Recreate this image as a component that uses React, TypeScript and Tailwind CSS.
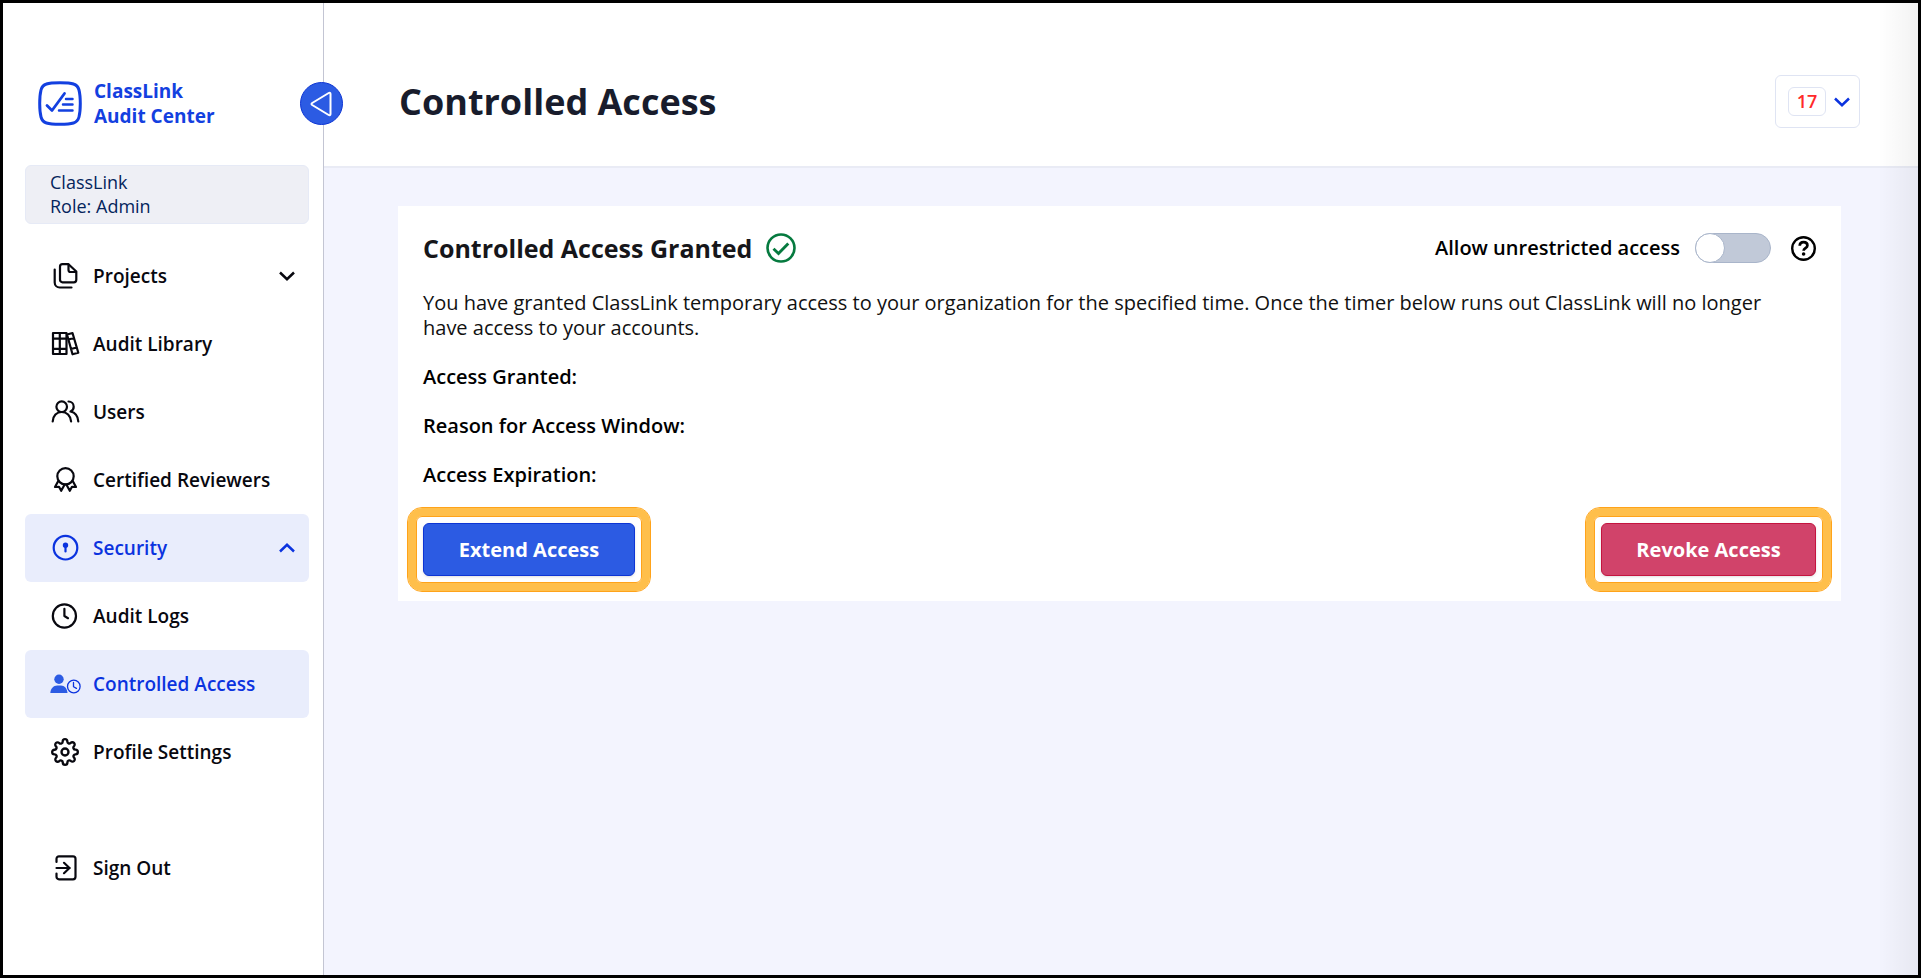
import type { ReactNode } from "react";
import { FiSettings } from "react-icons/fi";

function Icon({ children }: { children: ReactNode }) {
  return (
    <svg
      viewBox="0 0 28 28"
      className="size-7 shrink-0 overflow-visible"
      fill="none"
      stroke="currentColor"
      strokeWidth="2.2"
      strokeLinecap="round"
      strokeLinejoin="round"
      aria-hidden="true"
    >
      {children}
    </svg>
  );
}

function Chevron({ up = false }: { up?: boolean }) {
  return (
    <svg viewBox="0 0 16 10" className="h-[10px] w-4" fill="none" stroke="currentColor" strokeWidth="2.5" aria-hidden="true">
      <path d={up ? "M1 8.5 8 1.8l7 6.7" : "M1 1.5 8 8.2l7-6.7"} />
    </svg>
  );
}

const icons = {
  projects: (
    <Icon>
      <path d="M11.500 2.200H17.500L25.300 9.500v8.300a2.500 2.500 0 0 1-2.500 2.500H11.500A2.500 2.500 0 0 1 9 17.800V4.700a2.500 2.500 0 0 1 2.500-2.500Z" />
      <path d="M17.500 2.600v5.400a2 2 0 0 0 2 2h5.500" />
      <path d="M3.700 7.500v13a5 5 0 0 0 5 5H20.500" />
    </Icon>
  ),
  library: (
    <Icon>
      <path d="M2 3h13.500v21H2ZM8.800 3v21M2 8.600h13.500M2 18.800h13.500" />
      <path d="m16 4.500 5.500-1.500 5.800 19.800-5.800 1.500ZM17.500 9.500l5.500-1.500M20 19l5.700-1.500" />
    </Icon>
  ),
  users: (
    <Icon>
      <circle cx="10.700" cy="8.700" r="5.300" />
      <path d="M1.700 23.500c.3-5.800 4-9.500 9-9.500s8.900 3.700 9.400 9.500" />
      <path d="M17.500 3.500c3 0 5.200 2.200 5.200 5.200 0 2.300-1.200 4-3.200 4.800 4.500 1 7.500 5 7.800 10" />
    </Icon>
  ),
  reviewers: (
    <Icon>
      <circle cx="14.500" cy="10.300" r="8.200" />
      <path d="m7 15.500-3 5.500 4-.2 2.200 4 3.600-6.500M22 15.500l3 5.500-4-.2-2.200 4-3.600-6.500" />
    </Icon>
  ),
  security: (
    <Icon>
      <circle cx="14.500" cy="13.700" r="11.800" />
      <circle cx="14.500" cy="11.300" r="1.600" fill="currentColor" />
      <path d="M14.500 12v5.500" />
    </Icon>
  ),
  logs: (
    <Icon>
      <circle cx="13.400" cy="14" r="11.600" />
      <path d="M13.400 6.800V14l3.600 2.200" />
    </Icon>
  ),
  controlled: (
    <Icon>
      <circle cx="8" cy="9.200" r="4.700" fill="#2c5be3" stroke="none" />
      <path d="M-.7 23c.2-4.200 3-7.500 7-7.500h3.700c3.500 0 6.200 3 6.500 7.500Z" fill="#2c5be3" stroke="none" />
      <circle cx="22.800" cy="16.500" r="6.300" strokeWidth="1.300" />
      <path d="M22.500 12.500v4.200l3 1.700" strokeWidth="1.300" />
    </Icon>
  ),
  signOut: (
    <Icon>
      <path d="M5.500 8V4.800a2.500 2.500 0 0 1 2.500-2.500h14a2.500 2.500 0 0 1 2.500 2.500v18a2.500 2.500 0 0 1-2.500 2.500H8a2.500 2.500 0 0 1-2.500-2.500V19.500" />
      <path d="M5.500 14h13" />
      <path d="m13 8.800 5.500 5.200-5.500 5.200" />
    </Icon>
  ),
};

function NavItem({
  icon,
  label,
  active = false,
  chevron,
}: {
  icon: ReactNode;
  label: string;
  active?: boolean;
  chevron?: "up" | "down";
}) {
  const tone = active ? "bg-[#e9edfc] text-[#0b33df]" : "text-[#08080f]";
  const layout = `flex h-[68px] w-full items-center gap-[14px] rounded-md pr-[14px] pl-[26px] text-left text-[19px] font-semibold ${tone}`;
  if (chevron) {
    return (
      <li>
        <button type="button" aria-expanded={chevron === "up"} className={layout}>
          {icon}
          <span className="flex-1">{label}</span>
          <Chevron up={chevron === "up"} />
        </button>
      </li>
    );
  }
  return (
    <li>
      <a href="#" className={layout}>
        {icon}
        <span>{label}</span>
      </a>
    </li>
  );
}

function Highlight({ children }: { children: ReactNode }) {
  return (
    <div className="relative">
      {children}
      <span className="pointer-events-none absolute -inset-4 rounded-[15px] border border-[#ffa31a] before:absolute before:inset-0 before:rounded-[14px] before:border-8 before:border-[#ffbf4b] after:absolute after:inset-2 after:rounded-[6px] after:border after:border-[#ffa31a]" />
    </div>
  );
}

export default function App() {
  return (
    <div className="relative flex min-h-screen border-3 border-black bg-white font-['Open_Sans',sans-serif] text-black">
      <aside className="flex w-[321px] shrink-0 flex-col border-r border-[#c3c5d3] bg-white">
        <div className="mt-[78px] flex h-[45px] items-center">
          <svg viewBox="0 0 44 45" className="ml-[35px] h-[45px] w-11 shrink-0" fill="none" stroke="#1340e0" strokeLinecap="round" strokeLinejoin="round" aria-hidden="true">
            <path d="M22 1.700c6 0 10.500.2 13.500 1.300 3 1 4.700 3 5.500 6 1 4 1.300 8.500 1.300 13.500S42 32 41 36c-.8 3-2.500 5-5.500 6-3 1-7.500 1.300-13.500 1.300S11.500 43 8.500 42C5.500 41 3.800 39 3 36c-1-4-1.300-8.500-1.300-13.500S2 13 3 9c.8-3 2.500-5 5.500-6 3-1.100 7.500-1.300 13.500-1.300Z" strokeWidth="3" />
            <path d="m9 24.500 5 5L26.500 12.500" strokeWidth="2.800" />
            <path d="M28 18h6.500M25 23.500h9.500M21 29.500h13.500" strokeWidth="2.500" />
          </svg>
          <p className="ml-3 flex-1 text-[19px] leading-[25px] font-bold text-[#1340e0]">
            ClassLink
            <br />
            Audit Center
          </p>
          <button type="button" aria-label="Collapse menu" className="relative z-10 -mr-5 flex size-[43px] items-center justify-center rounded-full border border-[#0d35d4] bg-[#2c5be3] text-white">
            <svg viewBox="0 0 24 26" className="h-[26px] w-6" fill="none" stroke="currentColor" strokeWidth="2" strokeLinejoin="round" aria-hidden="true">
              <path d="M20.500 3c0-1.200-.8-1.600-1.800-1L2.200 12c-.9.600-.9 1.400 0 2l16.500 10c1 .6 1.800.2 1.800-1Z" />
            </svg>
          </button>
        </div>

        <div className="mt-[39px] mr-[14px] ml-[22px] h-[59px] rounded-md border border-[#e6eaf6] bg-[#eeeff5] px-6 pt-1 text-[18px] leading-6 text-[#04245c]">
          <p>ClassLink</p>
          <p>Role: Admin</p>
        </div>

        <nav aria-label="Main" className="mt-[18px] mr-[14px] ml-[22px]">
          <ul>
            <NavItem icon={icons.projects} label="Projects" chevron="down" />
            <NavItem icon={icons.library} label="Audit Library" />
            <NavItem icon={icons.users} label="Users" />
            <NavItem icon={icons.reviewers} label="Certified Reviewers" />
            <NavItem icon={icons.security} label="Security" active chevron="up" />
            <NavItem icon={icons.logs} label="Audit Logs" />
            <NavItem icon={icons.controlled} label="Controlled Access" active />
            <NavItem icon={<FiSettings className="size-7 shrink-0" />} label="Profile Settings" />
          </ul>
          <ul className="mt-12">
            <NavItem icon={icons.signOut} label="Sign Out" />
          </ul>
        </nav>
      </aside>

      <div className="flex min-w-0 flex-1 flex-col">
        <header className="flex h-[165px] items-center justify-between border-b-2 border-[#e9ebf5] pt-[34px] pr-[58px] pl-[75px]">
          <h1 className="text-[36px] leading-[50px] font-bold text-[#181c2c]">Controlled Access</h1>
          <button type="button" aria-label="17 notifications" className="flex h-[53px] w-[85px] items-center justify-between rounded-md border border-[#dfe4f3] pr-[9px] pl-3 text-[#0b33df]">
            <span className="flex h-[29px] w-[38px] items-center justify-center rounded-md border border-[#dfe4f3] text-[18px] font-semibold text-[#ff2a2a]">17</span>
            <Chevron />
          </button>
        </header>

        <main className="flex-1 bg-[#f3f4fe] pt-[38px] pr-[77px] pl-[74px]">
          <section className="bg-white px-[25px] py-[25px]">
            <div className="flex h-[34px] items-center justify-between">
              <div className="flex items-center gap-[14px]">
                <h2 className="text-[25px] leading-[34px] font-bold text-[#16161a]">Controlled Access Granted</h2>
                <svg viewBox="0 0 30 30" className="size-[30px]" fill="none" stroke="#067a3f" strokeWidth="2.600" aria-label="Granted" role="img">
                  <circle cx="15" cy="15" r="13.500" />
                  <path d="m7.500 15.800 5 4.700 9.800-10" strokeWidth="2.900" />
                </svg>
              </div>
              <div className="flex items-center">
                <label htmlFor="unrestricted" className="text-[20px] font-semibold">Allow unrestricted access</label>
                <input
                  id="unrestricted"
                  type="checkbox"
                  role="switch"
                  className="ml-[15px] flex h-[30px] w-[76px] appearance-none rounded-full border border-[#a9b5ca] bg-[#c1c9d8] before:-my-px before:-ml-px before:size-[30px] before:rounded-full before:border before:border-[#a9b5ca] before:bg-white"
                />
                <button type="button" aria-label="Help" className="ml-5">
                  <svg viewBox="0.5 0.5 25 25" className="size-[25px]" fill="none" stroke="currentColor" strokeWidth="2.400" aria-hidden="true">
                    <circle cx="13" cy="13" r="11.300" />
                    <path d="M9.200 10.200c.1-2.200 1.700-3.500 3.900-3.500s3.800 1.300 3.800 3.200c0 2.700-3.800 2.700-3.800 5.400" strokeWidth="2.700" />
                    <circle cx="13.100" cy="18.500" r="1.800" fill="currentColor" stroke="none" />
                  </svg>
                </button>
              </div>
            </div>

            <p className="mt-[25px] pr-12 text-[20px] leading-[25px] text-[#111]">
              You have granted ClassLink temporary access to your organization for the specified time. Once the timer below runs out ClassLink will no longer have access to your accounts.
            </p>
            <dl className="mt-6 flex flex-col gap-6 text-[20px] leading-[25px] font-semibold">
              <dt>Access Granted:</dt>
              <dt>Reason for Access Window:</dt>
              <dt>Access Expiration:</dt>
            </dl>

            <div className="mt-9 flex justify-between">
              <Highlight>
                <button type="button" className="h-[53px] w-[212px] rounded-md border border-[#0d35d4] bg-[#2c5be3] text-[20px] font-bold text-white shadow">
                  Extend Access
                </button>
              </Highlight>
              <Highlight>
                <button type="button" className="h-[53px] w-[215px] rounded-md border border-[#c4143f] bg-[#d1436a] text-[20px] font-bold text-white shadow">
                  Revoke Access
                </button>
              </Highlight>
            </div>
          </section>
        </main>
      </div>
      <div className="pointer-events-none absolute inset-y-0 right-0 w-10 bg-linear-to-l from-black/5 to-transparent" />
    </div>
  );
}
